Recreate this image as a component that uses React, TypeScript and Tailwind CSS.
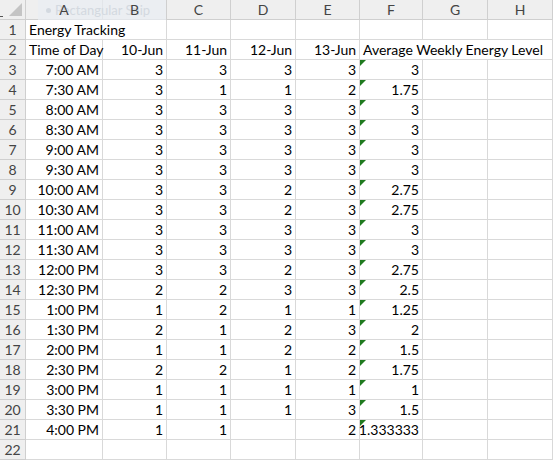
import React from 'react';

const cols = ['A', 'B', 'C', 'D', 'E', 'F', 'G', 'H'];

// time, 10-Jun, 11-Jun, 12-Jun, 13-Jun, average
const rows: [string, string, string, string, string, string][] = [
    ['7:00 AM', '3', '3', '3', '3', '3'],
    ['7:30 AM', '3', '1', '1', '2', '1.75'],
    ['8:00 AM', '3', '3', '3', '3', '3'],
    ['8:30 AM', '3', '3', '3', '3', '3'],
    ['9:00 AM', '3', '3', '3', '3', '3'],
    ['9:30 AM', '3', '3', '3', '3', '3'],
    ['10:00 AM', '3', '3', '2', '3', '2.75'],
    ['10:30 AM', '3', '3', '2', '3', '2.75'],
    ['11:00 AM', '3', '3', '3', '3', '3'],
    ['11:30 AM', '3', '3', '3', '3', '3'],
    ['12:00 PM', '3', '3', '2', '3', '2.75'],
    ['12:30 PM', '2', '2', '3', '3', '2.5'],
    ['1:00 PM', '1', '2', '1', '1', '1.25'],
    ['1:30 PM', '2', '1', '2', '3', '2'],
    ['2:00 PM', '1', '1', '2', '2', '1.5'],
    ['2:30 PM', '2', '2', '1', '2', '1.75'],
    ['3:00 PM', '1', '1', '1', '1', '1'],
    ['3:30 PM', '1', '1', '1', '3', '1.5'],
    ['4:00 PM', '1', '1', '', '2', '1.333333'],
];

const gridCols = 'grid grid-cols-[26px_77px_64px_64px_65px_64px_63px_65px_65px]';

const RowHeader: React.FC<{ n: number }> = ({ n }) => (
    <div className="h-5 bg-[#efefef] border-r border-b border-[#cfcfcf] text-[#444] flex items-center justify-center">
        {n}
    </div>
);

const Cell: React.FC<{ children?: React.ReactNode; right?: boolean; noBorder?: boolean; flag?: boolean }> = ({ children, right, noBorder, flag }) => (
    <div
        className={`relative h-5 border-b border-[#d9d9d9] ${noBorder ? '' : 'border-r'} flex items-center px-[3px] whitespace-nowrap overflow-visible ${right ? 'justify-end' : 'justify-start'}`}
    >
        {flag && (
            <span className="absolute top-0 left-0 w-0 h-0 border-t-[6px] border-r-[6px] border-t-[#1f7a1f] border-r-transparent" />
        )}
        <span className="relative">{children}</span>
    </div>
);

export default function App() {
    return (
        <div className="relative w-[553px] h-[460px] overflow-hidden bg-white text-black text-[14px] leading-none font-['Lato','Liberation_Sans',sans-serif]">
            {/* column headers */}
            <div className={`${gridCols} h-5 relative`}>
                <div className="relative bg-[#efefef] border-r border-b border-[#cfcfcf]">
                    <span className="absolute right-[3px] bottom-[3px] w-0 h-0 border-b-[13px] border-l-[13px] border-b-[#c4c4c4] border-l-transparent" />
                    <span className="absolute left-0 top-[16px] w-[3px] h-px bg-[#555]" />
                </div>
                {cols.map(c => (
                    <div key={c} className="bg-[#efefef] border-r border-b border-[#cfcfcf] text-[#444] flex items-center justify-center">
                        <span className="relative z-10">{c}</span>
                    </div>
                ))}

                {/* faded snipping-tool overlay, behind the column letters */}
                <div className="absolute left-[38px] top-0 w-[128px] h-[20px] bg-[#e9eef4]/70 flex items-center gap-1 pl-[8px] text-[13px] text-[#d3d9e0]">
                    <span className="w-[5px] h-[5px] rounded-full bg-[#d3d9e0]" />
                    <span>Rectangular Snip</span>
                </div>
            </div>

            {/* row 1 */}
            <div className={gridCols}>
                <RowHeader n={1} />
                <Cell noBorder>Energy Tracking</Cell>
                <Cell /><Cell /><Cell /><Cell /><Cell /><Cell /><Cell />
            </div>

            {/* row 2 */}
            <div className={gridCols}>
                <RowHeader n={2} />
                <Cell>Time of Day</Cell>
                <Cell right>10-Jun</Cell>
                <Cell right>11-Jun</Cell>
                <Cell right>12-Jun</Cell>
                <Cell right>13-Jun</Cell>
                <Cell noBorder>Average Weekly Energy Level</Cell>
                <Cell noBorder />
                <Cell />
            </div>

            {rows.map((r, i) => (
                <div key={i} className={gridCols}>
                    <RowHeader n={i + 3} />
                    <Cell right>{r[0]}</Cell>
                    <Cell right>{r[1]}</Cell>
                    <Cell right>{r[2]}</Cell>
                    <Cell right>{r[3]}</Cell>
                    <Cell right>{r[4]}</Cell>
                    <Cell right flag>{r[5]}</Cell>
                    <Cell />
                    <Cell />
                </div>
            ))}

            {/* row 22 */}
            <div className={gridCols}>
                <RowHeader n={22} />
                <Cell /><Cell /><Cell /><Cell /><Cell /><Cell /><Cell /><Cell />
            </div>
        </div>
    );
}
